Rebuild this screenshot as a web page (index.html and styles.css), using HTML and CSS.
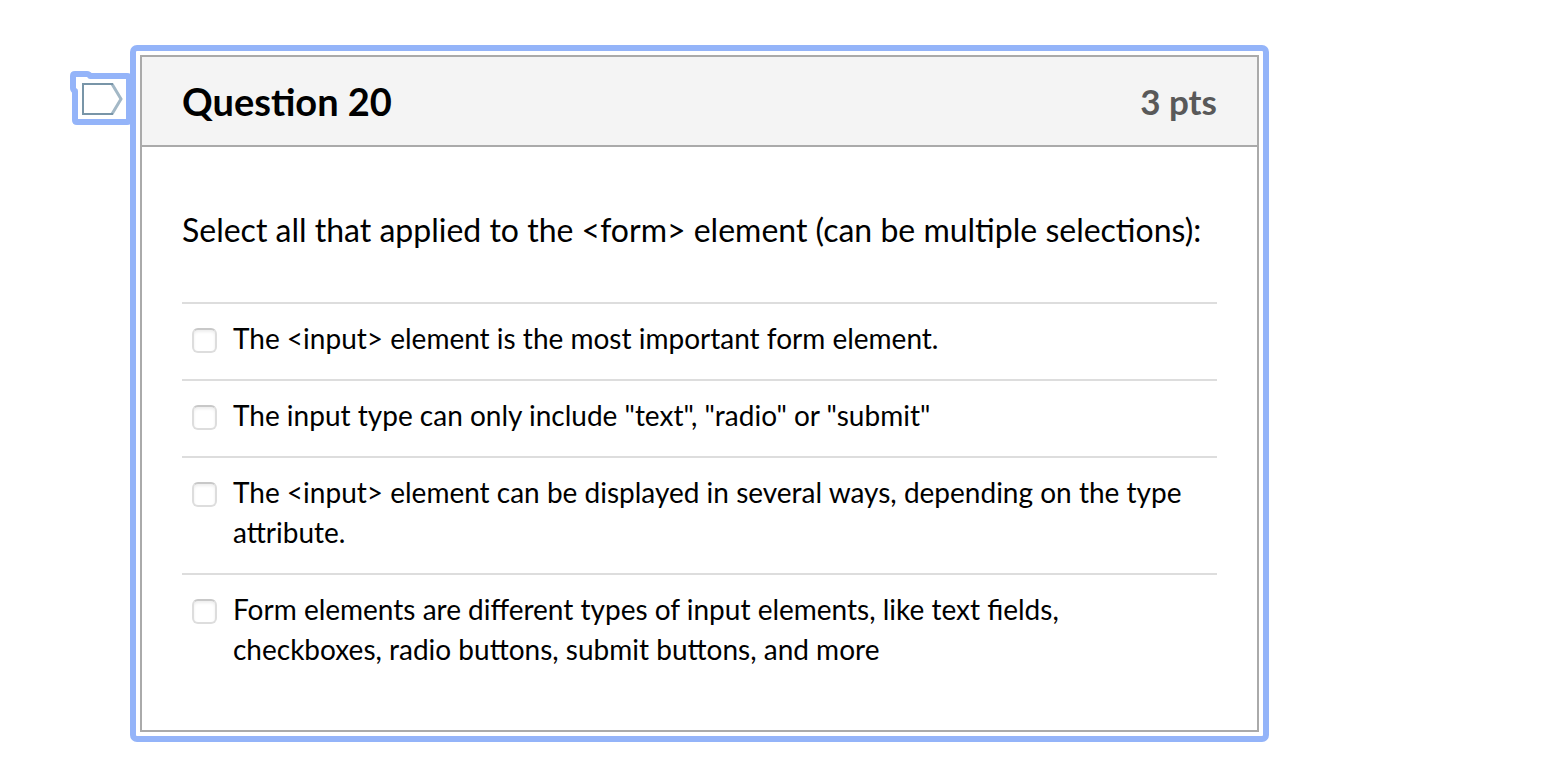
FILE: index.html
```html
<!DOCTYPE html>
<html lang="en">
<head>
  <meta charset="UTF-8">
  <title>Question 20</title>
  <link rel="stylesheet" href="styles.css">
</head>
<body>
  <main class="quiz">
    <button class="flag" type="button" aria-label="Flag question 20">
      <svg width="62" height="56" viewBox="0 0 62 56" fill="none">
        <path d="M5 3H17Q19 3 20 5H57Q59 5 59 7V49Q59 51 57 51H7Q5 51 5 49V20Q3 19 3 17V5Q3 3 5 3Z" stroke="#94b4f9" stroke-width="6" stroke-linejoin="round"/>
        <path d="M8 8H16V16H8Z" fill="#fff"/>
        <path d="M6 6H16V8H8V16H6Z" fill="#fff"/>
        <path d="M42 13L51 28L42 43" stroke="#a3b8c6" stroke-width="3"/>
        <path d="M43 13H13V43H43" stroke="#7895a8" stroke-width="2"/>
      </svg>
    </button>

    <section class="question">
      <form class="question-box">
        <header class="question-header">
          <h1 class="question-name">Question 20</h1>
          <span class="points">3 pts</span>
        </header>
        <div class="question-body">
          <p class="question-text">Select all that applied to the &lt;form&gt; element (can be multiple selections):</p>
          <div class="answers">
            <div class="answer">
              <input type="checkbox" id="answer1">
              <label for="answer1">The &lt;input&gt; element is the most important form element.</label>
            </div>
            <div class="answer">
              <input type="checkbox" id="answer2">
              <label for="answer2">The input type can only include "text", "radio" or "submit"</label>
            </div>
            <div class="answer">
              <input type="checkbox" id="answer3">
              <label for="answer3">The &lt;input&gt; element can be displayed in several ways, depending on the type attribute.</label>
            </div>
            <div class="answer">
              <input type="checkbox" id="answer4">
              <label for="answer4">Form elements are different types of input elements, like text fields, checkboxes, radio buttons, submit buttons, and more</label>
            </div>
          </div>
        </div>
      </form>
    </section>
  </main>
</body>
</html>
```

FILE: styles.css
```css
*, *::before, *::after {
  box-sizing: border-box;
}

body {
  margin: 0;
  background: #fff;
  color: #000;
  font-family: Lato, sans-serif;
}

.quiz {
  display: flex;
  align-items: flex-start;
  max-width: 1269px;
  padding: 45px 0 27px 70px;
}

/* flag toggle to the left of the question */
.flag {
  flex: none;
  width: 60px;
  margin: 26px 0 0;
  padding: 0;
  border: 0;
  background: none;
  cursor: pointer;
}

.flag svg {
  display: block;
}

/* blue focus ring around the box */
.question {
  flex: 1;
  padding: 4px;
  border: 6px solid #94b4f9;
  border-radius: 7px;
}

.question-box {
  border: 2px solid #aaa;
}

.question-header {
  display: flex;
  align-items: center;
  justify-content: space-between;
  padding: 20px 40px;
  border-bottom: 2px solid #aaa;
  background: #f4f4f4;
}

.question-name {
  margin: 0;
  font-size: 38px;
  font-weight: bold;
  line-height: 48px;
}

.points {
  color: #595959;
  font-size: 35px;
  font-weight: bold;
  line-height: 48px;
}

.question-body {
  padding: 59px 40px 40px;
}

.question-text {
  margin: 0 0 48px;
  font-size: 32px;
  line-height: 48px;
}

.answer {
  display: flex;
  align-items: flex-start;
  gap: 16px;
  padding: 14px 10px 21px;
  border-top: 2px solid #ddd;
  font-size: 28px;
  line-height: 40px;
}

.answer input {
  flex: none;
  appearance: none;
  width: 25px;
  height: 25px;
  margin: 10px 0 5px;
  border: 2px solid #ddd;
  border-top-color: #c8c8c8;
  border-radius: 6px;
  background: #fff;
  box-shadow: inset 0 2px 3px #eee;
}
```
